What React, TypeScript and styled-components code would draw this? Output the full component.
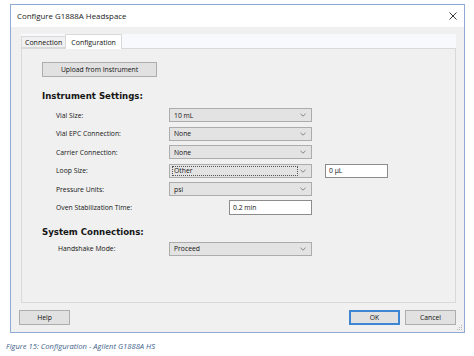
import React from 'react';
import styled, {createGlobalStyle} from 'styled-components';

const GlobalStyle = createGlobalStyle`
    html, body {
        margin: 0;
        padding: 0;
        background: #ffffff;
    }
    body {
        width: 474px;
        height: 356px;
        overflow: hidden;
        font-family: "Open Sans", "Noto Sans", sans-serif;
    }
`;

type Row = {
    label: string;
    value?: string;
    kind: 'select' | 'input';
    extra?: string;
    focused?: boolean;
};

const instrumentRows: Row[] = [
    {label: 'Vial Size:', value: '10 mL', kind: 'select'},
    {label: 'Vial EPC Connection:', value: 'None', kind: 'select'},
    {label: 'Carrier Connection:', value: 'None', kind: 'select'},
    {label: 'Loop Size:', value: 'Other', kind: 'select', extra: '0 µL', focused: true},
    {label: 'Pressure Units:', value: 'psi', kind: 'select'},
    {label: 'Oven Stabilization Time:', value: '0.2 min', kind: 'input'},
];

const Chevron = () => (
    <svg width="6" height="4" viewBox="0 0 6 4">
        <path d="M0.5 0.8 L3 3.2 L5.5 0.8" fill="none" stroke="#7a7a7a" strokeWidth="0.9"/>
    </svg>
);

const Dropdown: React.FunctionComponent<{value: string; focused?: boolean}> = ({value, focused}) => (
    <Select>
        <SelectText $focused={focused}>{value}</SelectText>
        <Chevron/>
    </Select>
);

const App: React.FunctionComponent = () => {
    return (
        <Page>
            <GlobalStyle/>
            <Window>
                <TitleBar>
                    <span>Configure G1888A Headspace</span>
                    <svg width="8" height="8" viewBox="0 0 8 8">
                        <path d="M0.5 0.5 L7.5 7.5 M7.5 0.5 L0.5 7.5" stroke="#222" strokeWidth="0.9"/>
                    </svg>
                </TitleBar>
                <Body>
                    <TabStrip>
                        <Tab>Connection</Tab>
                        <Tab $active>Configuration</Tab>
                    </TabStrip>
                    <Panel>
                        <PushButton $width={115}>Upload from Instrument</PushButton>
                        <SectionTitle>Instrument Settings:</SectionTitle>
                        <FormGrid>
                            {instrumentRows.map(row => (
                                <React.Fragment key={row.label}>
                                    <Label>{row.label}</Label>
                                    {row.kind === 'select' ? (
                                        <Dropdown value={row.value!} focused={row.focused}/>
                                    ) : (
                                        <TextBox $width={83} $right>{row.value}</TextBox>
                                    )}
                                    {row.extra ? <TextBox $width={63} $col={4}>{row.extra}</TextBox> : null}
                                </React.Fragment>
                            ))}
                        </FormGrid>
                        <SectionTitle $gap={9}>System Connections:</SectionTitle>
                        <FormGrid $indent={2} $top={2}>
                            <Label>Handshake Mode:</Label>
                            <Dropdown value="Proceed"/>
                        </FormGrid>
                    </Panel>
                    <ButtonRow>
                        <PushButton $width={51}>Help</PushButton>
                        <RightButtons>
                            <PushButton $width={51} $default>OK</PushButton>
                            <PushButton $width={51}>Cancel</PushButton>
                        </RightButtons>
                    </ButtonRow>
                    <Grip>
                        <svg width="6" height="6" viewBox="0 0 6 6">
                            <rect x="4" y="0" width="1" height="1" fill="#b5b5b5"/>
                            <rect x="2" y="2" width="1" height="1" fill="#b5b5b5"/>
                            <rect x="4" y="2" width="1" height="1" fill="#b5b5b5"/>
                            <rect x="0" y="4" width="1" height="1" fill="#b5b5b5"/>
                            <rect x="2" y="4" width="1" height="1" fill="#b5b5b5"/>
                            <rect x="4" y="4" width="1" height="1" fill="#b5b5b5"/>
                        </svg>
                    </Grip>
                </Body>
            </Window>
            <Caption>Figure 15: Configuration - Agilent G1888A HS</Caption>
        </Page>
    );
}

const Page = styled.div`
    padding: 4px 0 0 10px;
    display: flex;
    flex-direction: column;
`;

const Window = styled.div`
    width: 455px;
    height: 329px;
    box-sizing: border-box;
    border: 1px solid #8fabd3;
    background-color: #f0f0f0;
    display: flex;
    flex-direction: column;
`;

const TitleBar = styled.div`
    height: 22px;
    flex-shrink: 0;
    background-color: #ffffff;
    display: flex;
    align-items: center;
    justify-content: space-between;
    padding: 0 7px 0 6px;
    font-size: 7.9px;
    color: #1a1a1a;
`;

const Body = styled.div`
    flex: 1;
    position: relative;
    padding: 7px 8px 0 10px;
    display: flex;
    flex-direction: column;
`;

const TabStrip = styled.div`
    height: 14px;
    background-color: #f8f9fc;
    display: flex;
    align-items: flex-end;
    position: relative;
    z-index: 1;
`;

const Tab = styled.div<{$active?: boolean}>`
    height: ${props => props.$active ? '15px' : '12px'};
    margin-bottom: ${props => props.$active ? '-1px' : '0'};
    box-sizing: border-box;
    padding: 0 ${props => props.$active ? '5px' : '3px'};
    display: flex;
    align-items: center;
    font-size: 7px;
    color: #111;
    background-color: ${props => props.$active ? '#ffffff' : '#f0f0f0'};
    border: 1px solid #d9d9d9;
    border-bottom: ${props => props.$active ? 'none' : '1px solid #d9d9d9'};
    margin-left: ${props => props.$active ? '-1px' : '0'};
`;

const Panel = styled.div`
    height: 255px;
    box-sizing: border-box;
    border: 1px solid #d9d9d9;
    background-color: #f0f0f0;
    padding: 13px 0 0 20px;
    display: flex;
    flex-direction: column;
    align-items: flex-start;
`;

const PushButton = styled.div<{$width: number; $default?: boolean}>`
    width: ${props => props.$width}px;
    height: 15px;
    box-sizing: border-box;
    border: 1px solid ${props => props.$default ? '#3c86d4' : '#adadad'};
    box-shadow: ${props => props.$default ? 'inset 0 0 0 1px #3c86d4' : 'none'};
    background-color: #e1e1e1;
    display: flex;
    align-items: center;
    justify-content: center;
    font-size: 6.8px;
    color: #111;
`;

const SectionTitle = styled.div<{$gap?: number}>`
    margin-top: ${props => props.$gap ?? 11}px;
    height: 16px;
    line-height: 16px;
    font-family: "DejaVu Sans", Verdana, sans-serif;
    font-weight: bold;
    font-size: 8.6px;
    color: #151515;
`;

const FormGrid = styled.div<{$indent?: number; $top?: number}>`
    margin-top: ${props => props.$top ?? 4}px;
    margin-left: ${props => 14 + (props.$indent ?? 0)}px;
    display: grid;
    grid-template-columns: ${props => 113 - (props.$indent ?? 0)}px 143px 13px 63px;
    grid-auto-rows: 14px;
    row-gap: 4.6px;
    align-items: center;
`;

const Label = styled.div`
    grid-column: 1;
    font-size: 6.8px;
    color: #151515;
    white-space: nowrap;
`;

const Select = styled.div`
    grid-column: 2;
    height: 14px;
    box-sizing: border-box;
    border: 1px solid #acacac;
    background-color: #e3e3e3;
    display: flex;
    align-items: center;
    justify-content: space-between;
    padding: 0 5px 0 2px;
`;

const SelectText = styled.div<{$focused?: boolean}>`
    flex: ${props => props.$focused ? '0 0 126px' : '1'};
    height: 10px;
    box-sizing: border-box;
    border: 1px dotted ${props => props.$focused ? '#555' : 'transparent'};
    display: flex;
    align-items: center;
    padding-left: 1px;
    font-size: 6.8px;
    color: #151515;
`;

const TextBox = styled.div<{$width: number; $right?: boolean; $col?: number}>`
    grid-column: ${props => props.$col ?? 2};
    justify-self: ${props => props.$right ? 'end' : 'start'};
    width: ${props => props.$width}px;
    height: ${props => props.$right ? 15 : 14}px;
    box-sizing: border-box;
    border: 1px solid #8c8c8c;
    background-color: #ffffff;
    display: flex;
    align-items: center;
    padding-left: 3px;
    font-size: 6.8px;
    color: #151515;
`;

const ButtonRow = styled.div`
    margin-top: 7px;
    margin-left: -2px;
    display: flex;
    justify-content: space-between;
`;

const RightButtons = styled.div`
    display: flex;
    gap: 5px;
`;

const Grip = styled.div`
    position: absolute;
    right: 1px;
    bottom: 1px;
    line-height: 0;
`;

const Caption = styled.div`
    margin-top: 8px;
    margin-left: -4px;
    font-size: 7.6px;
    font-style: italic;
    color: #3e5f8c;
`;

export default App;
